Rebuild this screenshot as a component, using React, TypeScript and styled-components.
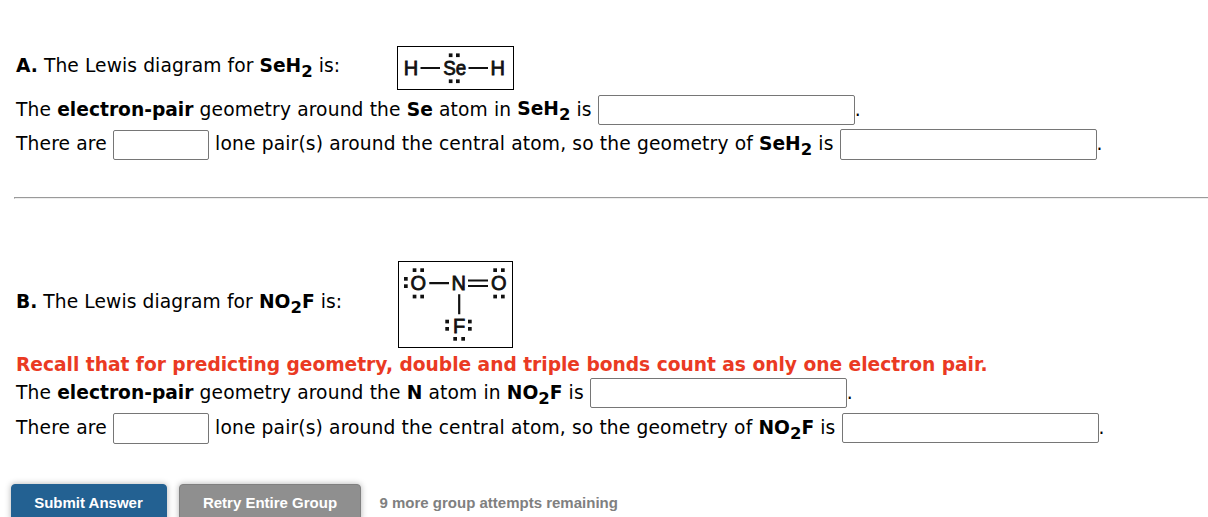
import React from "react";
import styled, { createGlobalStyle } from "styled-components";

const GlobalStyle = createGlobalStyle`
  body {
    margin: 0;
    background: #fff;
    overflow: hidden;
  }
`;

interface FieldProps {
  $width: number;
  $height?: number;
  $top?: number;
}

const Page = styled.main`
  height: 517px;
  overflow: hidden;
  color: #000;
  font-family: Verdana, "DejaVu Sans", sans-serif;
  font-size: 18.67px;
`;
const Question = styled.section<{ $top: number }>`
  padding: ${(props) => props.$top}px 0 0 16px;
`;
const Line = styled.div<{ $height: number; $text?: number }>`
  display: flex;
  align-items: flex-start;
  height: ${(props) => props.$height}px;
  line-height: ${(props) => props.$text || 30}px;
  white-space: pre;
`;
const Text = styled.span<{ $width?: number; $spacing?: number }>`
  flex: none;
  min-width: ${(props) => props.$width || 0}px;
  letter-spacing: ${(props) => props.$spacing || 0.15}px;
`;
const Bold = styled.b<{ $raised?: boolean }>`
  line-height: 0;
  letter-spacing: 0;
  vertical-align: ${(props) => (props.$raised ? 1 : 0)}px;
`;
const Sub = styled.sub`
  font-size: 16.5px;
  line-height: 0;
  vertical-align: -5px;
`;
const Field = styled.input<FieldProps>`
  box-sizing: border-box;
  flex: none;
  width: ${(props) => props.$width}px;
  height: ${(props) => props.$height || 30}px;
  margin: ${(props) => props.$top || 0}px 0 0;
  border: 1px solid #767676;
  border-radius: 2px;
  background: #fff;
`;
const Recall = styled.p`
  box-sizing: border-box;
  height: 28px;
  margin: 0;
  padding-top: 1px;
  color: #ea3a23;
  font-weight: bold;
  line-height: 28px;
  letter-spacing: -0.03px;
  white-space: nowrap;
`;
const Diagram = styled.svg`
  box-sizing: border-box;
  flex: none;
  border: 1px solid #000;
  font-family: "Liberation Sans", Arial, sans-serif;
  font-size: 20px;
  fill: #111;
  stroke: #111;
  stroke-width: 0;
`;
const Atom = styled.text`
  stroke-width: 0.8px;
`;
const Bonds = styled.path`
  stroke-width: 2.2px;
`;
const Divider = styled.hr`
  height: 0;
  margin: 37px 0 0 14px;
  border: 1px solid;
  border-color: #9a9a9a #eee #eee #9a9a9a;
  border-right: 0;
`;
const Actions = styled.footer`
  display: flex;
  padding: 40px 0 0 11px;
  font: bold 15px/38px "Liberation Sans", Arial, sans-serif;
`;
const Button = styled.button<{ $width: number; $muted?: boolean }>`
  box-sizing: border-box;
  width: ${(props) => props.$width}px;
  height: 38px;
  margin: 0 12px 0 0;
  padding: 0 ${(props) => (props.$muted ? 0 : 1)}px 0 0;
  border: 1px solid ${(props) => (props.$muted ? "#808080" : "#236192")};
  border-radius: 4px;
  background: ${(props) => (props.$muted ? "#8f8f8f" : "#236192")};
  box-shadow: 0 0 6px rgba(0, 0, 0, 0.3);
  color: #fff;
  font: inherit;
  line-height: 36px;
`;
const Attempts = styled.span`
  margin-left: 6.5px;
  color: #808080;
`;

interface FormulaProps {
  base: string;
  tail?: string;
  raised?: boolean;
}

const Formula = ({ base, tail, raised }: FormulaProps) => (
  <Bold $raised={raised}>
    {base}
    <Sub>2</Sub>
    {tail}
  </Bold>
);

// each entry is the top left corner of one electron dot
const Dots = ({ at }: { at: number[][] }) => (
  <>
    {at.map(([x, y]) => (
      <rect key={x + "_" + y} x={x} y={y} width="3.7" height="3.7" />
    ))}
  </>
);

const SeleniumDiagram = () => (
  <Diagram width="117" height="44" viewBox="0 0 115 42">
    <Atom x="5.7" y="28.3">H</Atom>
    <Atom x="45.2" y="28.3" textLength="23" lengthAdjust="spacingAndGlyphs">Se</Atom>
    <Atom x="92.4" y="28.3">H</Atom>
    <Bonds d="M22.5 21h19.5M70.5 21h19.5" />
    <Dots at={[[50.8, 6.4], [58, 6.4], [50.8, 32.4], [58, 32.4]]} />
  </Diagram>
);

const NitrylDiagram = () => (
  <Diagram width="115" height="87" viewBox="0 0 113 85">
    <Atom x="11.4" y="28">O</Atom>
    <Atom x="52.6" y="28">N</Atom>
    <Atom x="92" y="28">O</Atom>
    <Atom x="54" y="70.7">F</Atom>
    <Bonds d="M30.3 21.2h19.7M69 18.5h20M69 24h20M60.2 32.3v20" />
    <Dots
      at={[
        [13.7, 6.3], [21.3, 6.3], [13.7, 32.7], [21.3, 32.7], [5, 15], [5, 22.3],
        [94.3, 6.3], [102, 6.3], [94.3, 32.7], [102, 32.7],
        [46.3, 57.7], [46.3, 65], [69, 57.7], [69, 65], [54.3, 75], [62.3, 75],
      ]}
    />
  </Diagram>
);

const App = () => {
  return (
    <Page>
      <GlobalStyle />
      <Question $top={46}>
        <Line $height={49} $text={40}>
          <Text $width={381} $spacing={0.1}><Bold>A.</Bold> The Lewis diagram for <Formula base="SeH" /> is:</Text>
          <SeleniumDiagram />
        </Line>
        <Line $height={34}>
          <Text $spacing={0.14}>The <Bold>electron-pair</Bold> geometry around the <Bold>Se</Bold> atom in <Formula base="SeH" raised /> is </Text>
          <Field $width={257} />
          <Text>.</Text>
        </Line>
        <Line $height={31}>
          <Text $width={97}>There are </Text>
          <Field $width={96} $top={1} />
          <Text> lone pair(s) around the central atom, so the geometry of <Formula base="SeH" /> is </Text>
          <Field $width={257} $height={31} />
          <Text>.</Text>
        </Line>
      </Question>
      <Divider />
      <Question $top={62}>
        <Line $height={89} $text={81}>
          <Text $width={382} $spacing={0.1}><Bold>B.</Bold> The Lewis diagram for <Formula base="NO" tail="F" /> is:</Text>
          <NitrylDiagram />
        </Line>
        <Recall>Recall that for predicting geometry, double and triple bonds count as only one electron pair.</Recall>
        <Line $height={35}>
          <Text $spacing={0.14}>The <Bold>electron-pair</Bold> geometry around the <Bold>N</Bold> atom in <Formula base="NO" tail="F" /> is </Text>
          <Field $width={257} />
          <Text>.</Text>
        </Line>
        <Line $height={31}>
          <Text $width={97}>There are </Text>
          <Field $width={96} $height={31} />
          <Text $spacing={0.14}> lone pair(s) around the central atom, so the geometry of <Formula base="NO" tail="F" /> is </Text>
          <Field $width={257} />
          <Text>.</Text>
        </Line>
      </Question>
      <Actions>
        <Button $width={156}>Submit Answer</Button>
        <Button $width={182} $muted>Retry Entire Group</Button>
        <Attempts>9 more group attempts remaining</Attempts>
      </Actions>
    </Page>
  );
};

export default App;
